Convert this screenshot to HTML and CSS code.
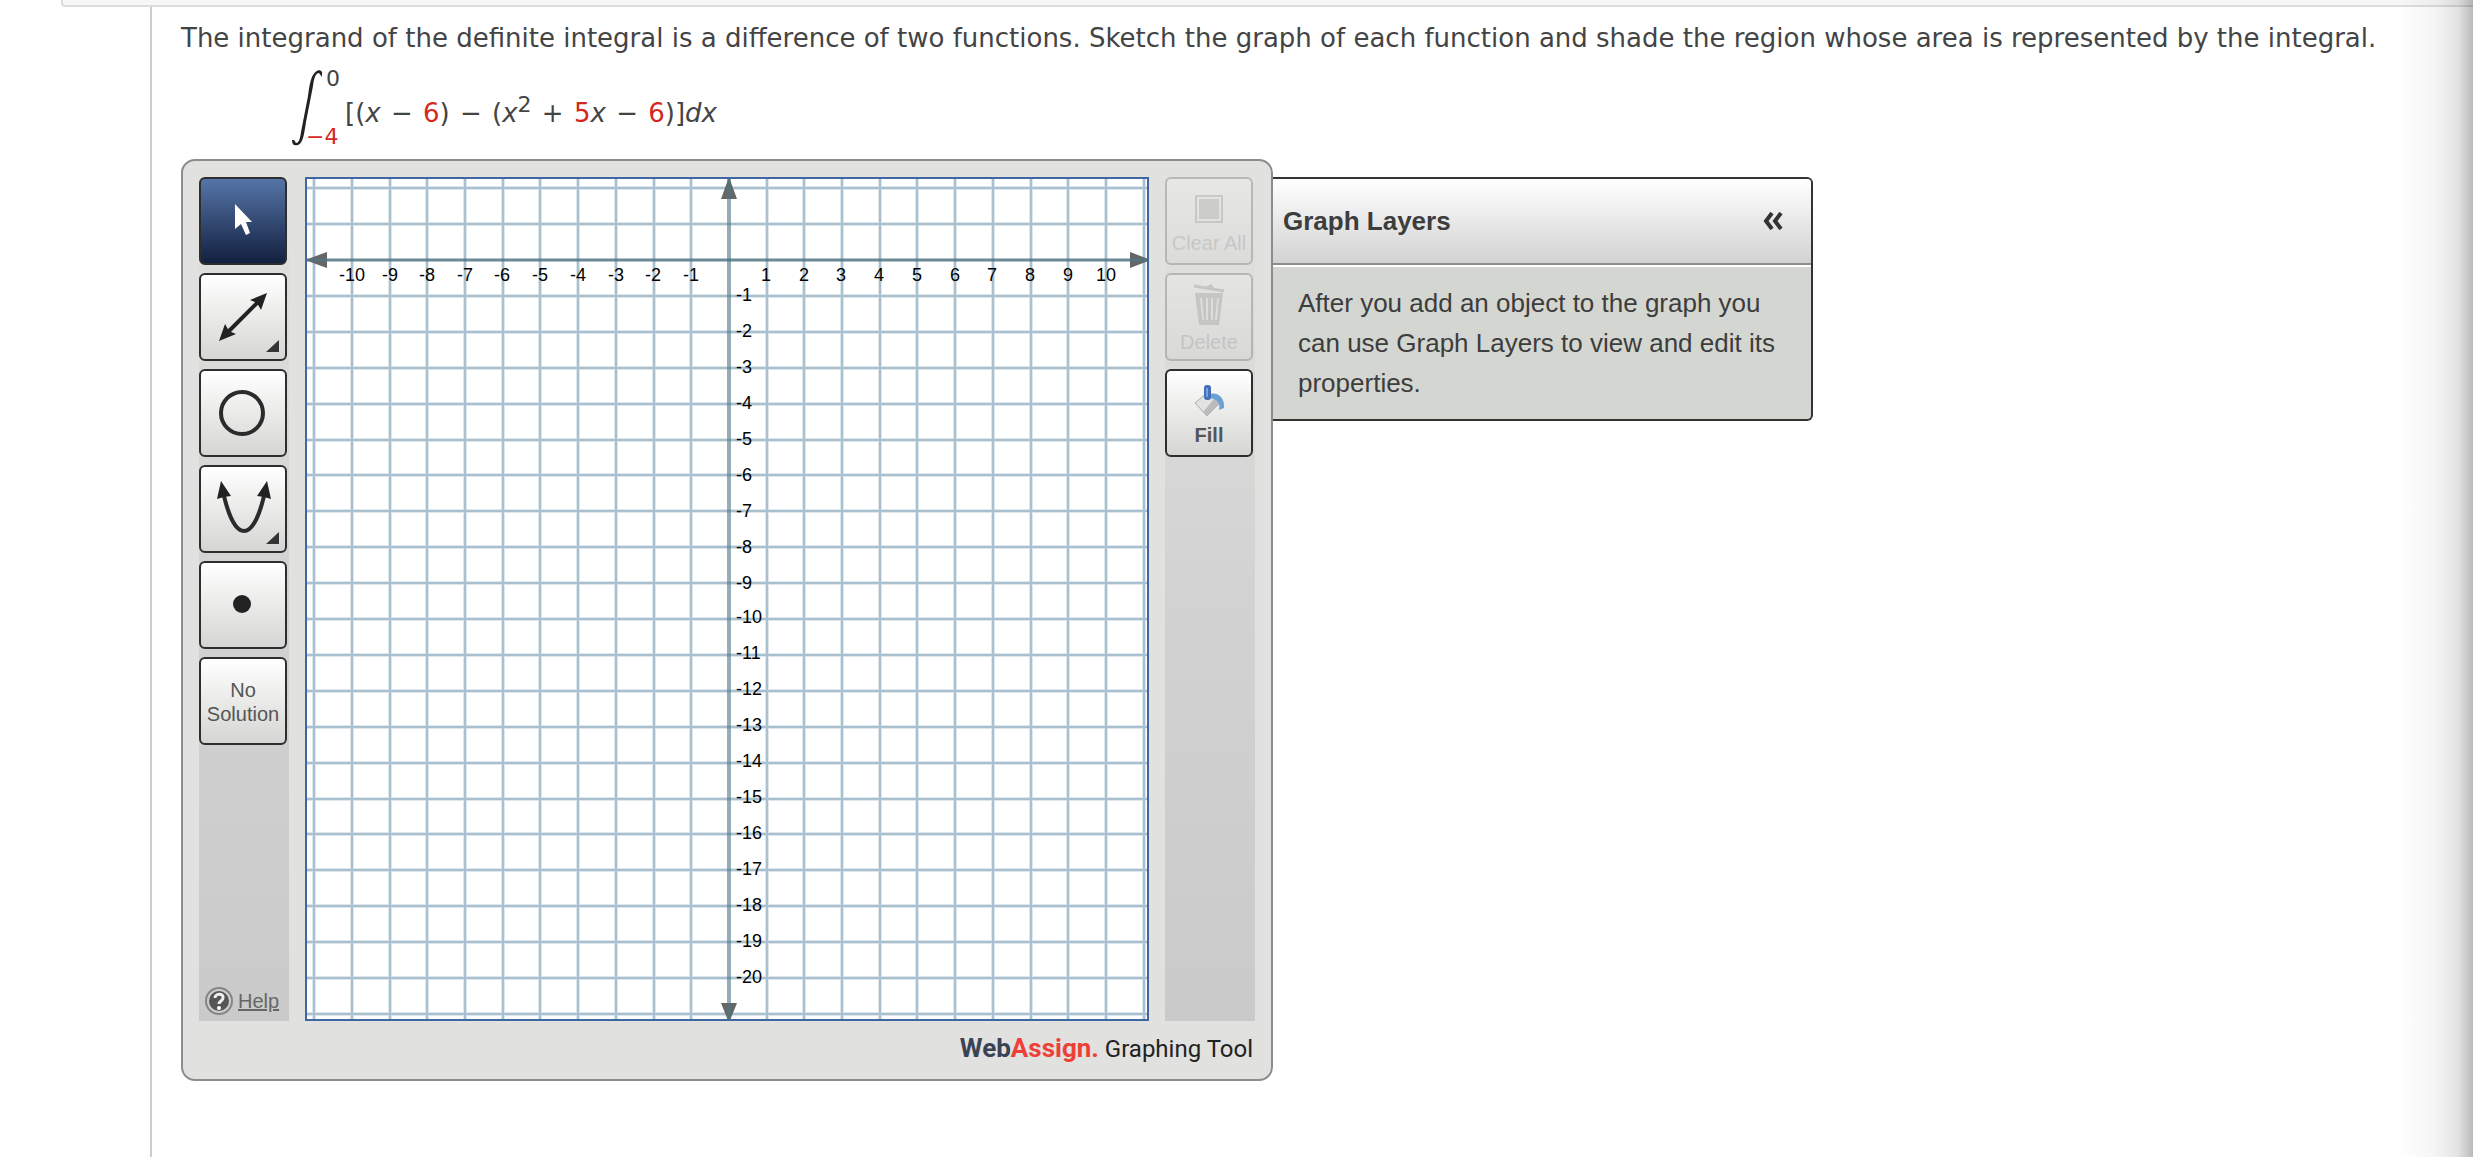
FILE: index.html
```html
<!DOCTYPE html>
<html lang="en">
<head>
<meta charset="utf-8">
<title>WebAssign Graphing Tool</title>
<link rel="stylesheet" href="styles.css">
</head>
<body>
<div class="topbar"></div>
<main class="question">
  <p class="prompt">The integrand of the definite integral is a difference of two functions. Sketch the graph of each function and shade the region whose area is represented by the integral.</p>

  <div class="formula">
    <svg class="integral" viewBox="0 0 32 76" aria-label="integral">
      <path d="M1 70C1 75 4 76 7 75C12 73 13 65 15 52L22 16C23 7 25 3 28 3L31 7L31 2C29-1 25 0 22 5C19 10 18 19 17 26L10 62C9 69 8 73 5 73L3 70Z" fill="#222"/>
    </svg>
    <div class="limits"><span class="upper">0</span><span class="lower red">−4</span></div>
    <div class="integrand">[(<i>x</i> <span class="op">−</span> <span class="red">6</span>) <span class="op">−</span> (<i>x</i><sup>2</sup> <span class="op">+</span> <span class="red">5</span><i>x</i> <span class="op">−</span> <span class="red">6</span>)]<i>dx</i></div>
  </div>

  <div class="workspace">
    <section class="tool" aria-label="Graphing Tool">
      <div class="tool-body">
        <div class="rail">
          <button class="btn active" aria-label="Select">
            <svg viewBox="0 0 84 84"><path d="M34 25V50L40 45L45 56L49 54L45 43H51Z" fill="#fff"/></svg>
          </button>
          <button class="btn" aria-label="Line">
            <svg viewBox="0 0 84 84"><path d="M26 58L58 26" stroke="#222" stroke-width="4"/><path d="M18 66L24 49L28 56L35 59ZM66 18L60 35L56 28L49 25Z" fill="#222"/><path d="M78 65V77H65Z" fill="#333"/></svg>
          </button>
          <button class="btn" aria-label="Circle">
            <svg viewBox="0 0 84 84"><circle cx="41" cy="42" r="21" fill="none" stroke="#2b2b2b" stroke-width="4"/></svg>
          </button>
          <button class="btn" aria-label="Parabola">
            <svg viewBox="0 0 84 84"><path d="M23 29C28 50 35 64 43 64S58 50 63 29" fill="none" stroke="#2b2b2b" stroke-width="4"/><path d="M20 14L30 29L23 30L16 32ZM66 14L70 32L63 30L56 29Z" fill="#222"/><path d="M78 65V77H65Z" fill="#333"/></svg>
          </button>
          <button class="btn" aria-label="Point">
            <svg viewBox="0 0 84 84"><circle cx="41" cy="41" r="9" fill="#222"/></svg>
          </button>
          <button class="btn text-btn">No<br>Solution</button>
          <a class="help" href="#help">
            <svg viewBox="0 0 30 30"><circle cx="15" cy="15" r="13" fill="#ccc" stroke="#858585" stroke-width="2"/><circle cx="15" cy="15" r="10" fill="#555"/><path d="M11 12C11 7 20 7 19 12C19 15 15 15 15 18" fill="none" stroke="#eee" stroke-width="3"/><circle cx="15" cy="22" r="2" fill="#fff"/></svg>
            <span>Help</span>
          </a>
        </div>

        <svg class="graph" viewBox="0 0 840 840" role="img" aria-label="Coordinate grid">
          <defs>
            <path id="grid" d="M7 0V840M45 0V840M83 0V840M120 0V840M158 0V840M196 0V840M233 0V840M271 0V840M309 0V840M347 0V840M384 0V840M460 0V840M497 0V840M535 0V840M573 0V840M610 0V840M648 0V840M686 0V840M724 0V840M761 0V840M799 0V840M837 0V840M0 9H840M0 45H840M0 117H840M0 153H840M0 189H840M0 225H840M0 261H840M0 296H840M0 332H840M0 368H840M0 404H840M0 440H840M0 476H840M0 512H840M0 548H840M0 584H840M0 620H840M0 655H840M0 691H840M0 727H840M0 763H840M0 799H840M0 835H840"/>
          </defs>
          <use href="#grid" class="grid-halo"/>
          <use href="#grid" class="grid-line"/>
          <path class="arrow" d="M-2 81L20 73V89ZM844 81L823 73V89ZM422 -2L414 20H430ZM422 844L414 824H430Z"/>
          <path class="axis-x" d="M0 81H840"/>
          <path class="axis-y" d="M422 0V840"/>
          <g class="labels centered">
            <text x="45" y="102">-10</text><text x="83" y="102">-9</text><text x="120" y="102">-8</text><text x="158" y="102">-7</text><text x="195" y="102">-6</text><text x="233" y="102">-5</text><text x="271" y="102">-4</text><text x="309" y="102">-3</text><text x="346" y="102">-2</text><text x="384" y="102">-1</text>
            <text x="459" y="102">1</text><text x="497" y="102">2</text><text x="534" y="102">3</text><text x="572" y="102">4</text><text x="610" y="102">5</text><text x="648" y="102">6</text><text x="685" y="102">7</text><text x="723" y="102">8</text><text x="761" y="102">9</text><text x="799" y="102">10</text>
          </g>
          <g class="labels">
            <text x="429" y="122">-1</text><text x="429" y="158">-2</text><text x="429" y="194">-3</text><text x="429" y="230">-4</text><text x="429" y="266">-5</text><text x="429" y="302">-6</text><text x="429" y="338">-7</text><text x="429" y="374">-8</text><text x="429" y="410">-9</text><text x="429" y="444">-10</text><text x="429" y="480">-11</text><text x="429" y="516">-12</text><text x="429" y="552">-13</text><text x="429" y="588">-14</text><text x="429" y="624">-15</text><text x="429" y="660">-16</text><text x="429" y="696">-17</text><text x="429" y="732">-18</text><text x="429" y="768">-19</text><text x="429" y="804">-20</text>
          </g>
        </svg>

        <div class="rail">
          <button class="btn icon-text" disabled>
            <svg class="small-icon" viewBox="0 0 32 32"><path d="M3 3H29V29H3Z" fill="none" stroke="#777" stroke-width="2"/><path d="M6 6H26V26H6Z" fill="#888"/></svg>
            <span>Clear All</span>
          </button>
          <button class="btn icon-text tall" disabled>
            <svg class="tall-icon" viewBox="0 0 32 42"><path d="M1 2L31 7M13 4L18 2L20 5" fill="none" stroke="#777" stroke-width="3"/><path d="M2 9H30L26 41H6Z" fill="#777"/><path d="M8 14L10 36M14 14V36M19 14V36M25 14L23 36" stroke="#ddd" stroke-width="2"/></svg>
            <span>Delete</span>
          </button>
          <button class="btn icon-text">
            <svg class="small-icon" viewBox="0 0 32 32"><path d="M2 18L15 7L26 19L14 31Z" fill="#e2e2e2" stroke="#aaa"/><path d="M14 31L26 19L21 14L10 27Z" fill="#bbb"/><path d="M17 9C25 7 32 13 31 23L26 25C28 17 23 14 17 13Z" fill="#6ba0d2"/><rect x="11" y="0" width="7" height="15" rx="3" fill="#426fb9"/><path d="M14 3V12" stroke="#7ba0dc" stroke-width="2"/></svg>
            <span>Fill</span>
          </button>
        </div>
      </div>
      <footer class="brand"><b>Web<span class="brand-red">Assign.</span></b> <span>Graphing Tool</span></footer>
    </section>

    <aside class="layers">
      <header class="layers-head">
        <h2>Graph Layers</h2>
        <button class="collapse" aria-label="Collapse">
          <svg viewBox="0 0 20 18"><path d="M9 1L3 9L9 17M18 1L12 9L18 17" fill="none" stroke="#333" stroke-width="4"/></svg>
        </button>
      </header>
      <p class="layers-text">After you add an object to the graph you can use Graph Layers to view and edit its properties.</p>
    </aside>
  </div>
</main>
<div class="edge-shade"></div>
</body>
</html>
```
FILE: styles.css
```css
* { box-sizing: border-box; }
body {
  margin: 0;
  min-height: 100vh;
  display: flex;
  flex-direction: column;
  background: #fff;
  color: #444;
  font-family: Verdana, "DejaVu Sans", sans-serif;
  font-size: 26px;
}
.topbar {
  height: 7px;
  margin-left: 61px;
  background: #f7f7f7;
  border: 2px solid #ddd;
  border-top: 0;
  border-right: 0;
  border-bottom-left-radius: 4px;
}
.question {
  flex: 1;
  margin-left: 150px;
  padding: 15px 80px 76px 29px;
  border-left: 2px solid #ccc;
}
.prompt { margin: 0; line-height: 32px; }
.red { color: #d4281e; }
.formula {
  display: flex;
  height: 76px;
  margin: 16px 0 13px 110px;
}
.integral { width: 32px; height: 76px; }
.limits {
  display: flex;
  flex-direction: column;
  justify-content: space-between;
  width: 22px;
  font-size: 22px;
  line-height: 18px;
}
.upper { padding-left: 3px; }
.lower { margin-left: -17px; white-space: nowrap; }
.integrand { line-height: 32px; padding-top: 27px; }
.integrand sup { font-size: 22px; line-height: 0; }
.op { margin: 0 2px; }

.workspace { display: flex; align-items: flex-start; }
.tool {
  flex: none;
  padding: 16px 16px 0;
  background: #e1e1df;
  border: 2px solid #8c8c8b;
  border-radius: 14px;
}
.tool-body { display: flex; gap: 16px; }
.rail {
  display: flex;
  flex-direction: column;
  gap: 8px;
  width: 90px;
  background: linear-gradient(#e1e1df, #d2d2d2 50%, #cacaca);
}
.btn {
  display: block;
  width: 88px;
  height: 88px;
  padding: 0;
  border: 2px solid #2e2e2e;
  border-radius: 6px;
  background: linear-gradient(#fff, #d5d5d3);
  color: #555;
  font: bold 20px/24px "Liberation Sans", Arial, sans-serif;
}
.btn > svg { display: block; width: 84px; height: 84px; }
.btn.active { background: linear-gradient(#5575a8, #13203f); }
.btn.text-btn { padding-top: 2px; font-weight: normal; }
.btn.icon-text {
  display: flex;
  flex-direction: column;
  align-items: center;
  justify-content: flex-end;
  gap: 6px;
  padding-bottom: 8px;
}
.btn.tall { gap: 4px; padding-bottom: 5px; }
.btn .small-icon { width: 32px; height: 32px; }
.btn .tall-icon { width: 32px; height: 42px; }
.btn:disabled { opacity: 0.22; font-weight: normal; color: #777; white-space: nowrap; }
.help {
  display: flex;
  align-items: center;
  gap: 4px;
  margin: auto 0 5px 5px;
  color: #666;
  font: 20px/30px "Liberation Sans", Arial, sans-serif;
}
.help svg { width: 30px; height: 30px; }

.graph {
  width: 844px;
  height: 844px;
  background: #fff;
  border: 2px solid #3f66a0;
}
.grid-halo { stroke: #8fafc0; stroke-width: 4; stroke-opacity: 0.3; }
.grid-line { stroke: #86a6be; stroke-width: 2; stroke-opacity: 0.6; }
.arrow { fill: #666; }
.axis-x { stroke: #517683; stroke-width: 3; stroke-opacity: 0.85; }
.axis-y { stroke: #4d7480; stroke-width: 4; stroke-opacity: 0.6; }
.labels { fill: #000; font: 18px "Liberation Sans", Arial, sans-serif; }
.centered { text-anchor: middle; }

.brand {
  padding: 13px 2px 0 0;
  height: 58px;
  text-align: right;
  color: #222;
  font: 24px/28px Roboto, sans-serif;
}
.brand b { color: #3a4354; font-size: 26px; }
.brand .brand-red { color: #ee4036; }

.layers {
  width: 540px;
  margin-top: 18px;
  border: 2px solid #333;
  border-left: 0;
  border-radius: 0 6px 6px 0;
  background: #d4d6d1;
  color: #3d3d3d;
  font-family: "Liberation Sans", Arial, sans-serif;
  overflow: hidden;
}
.layers-head {
  display: flex;
  align-items: center;
  justify-content: space-between;
  height: 86px;
  padding: 0 28px 0 10px;
  background: linear-gradient(#fff, #d2d2d2);
  border-bottom: 2px solid #8c8c8b;
}
.layers-head h2 { margin: 0; font-size: 26px; }
.collapse { width: 20px; height: 18px; padding: 0; border: 0; background: none; }
.collapse svg { display: block; width: 20px; height: 18px; }
.layers-text {
  margin: 0;
  padding: 16px 25px;
  border-top: 2px solid #fff;
  font-size: 26px;
  line-height: 40px;
}
.edge-shade {
  position: absolute;
  top: 0;
  right: 0;
  bottom: 0;
  width: 76px;
  background: linear-gradient(to right, transparent, rgba(0,0,0,.04) 50%, rgba(0,0,0,.11) 80%, rgba(0,0,0,.27));
  pointer-events: none;
}
```
